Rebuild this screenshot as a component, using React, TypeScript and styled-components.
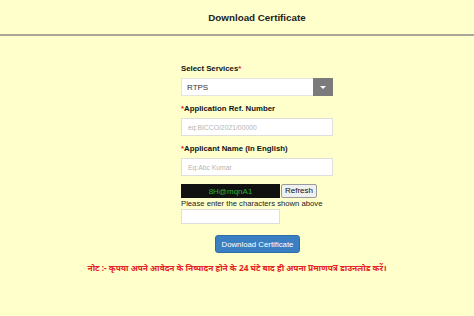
import React from "react";
import styled, { createGlobalStyle } from "styled-components";

const GlobalStyle = createGlobalStyle`
  html, body {
    margin: 0;
    padding: 0;
    background: #ffffcc;
    font-family: "Liberation Sans", Arial, sans-serif;
  }
`;

const Page = styled.div`
  width: 474px;
  height: 316px;
  background: #ffffcc;
  overflow: hidden;
`;

const Header = styled.div`
  height: 36px;
  border-bottom: 2px solid #a9a796;
  display: flex;
  align-items: center;
  justify-content: center;
  padding-left: 40px;
  box-sizing: border-box;
  font-size: 9.8px;
  font-weight: bold;
  color: #222;
`;

const Form = styled.div`
  width: 152px;
  margin: 28px 0 0 181px;
  display: flex;
  flex-direction: column;
`;

const Label = styled.div`
  font-size: 7.8px;
  font-weight: bold;
  color: #111;
  height: 10px;
  line-height: 10px;
  margin-bottom: 4px;
  white-space: nowrap;
`;

const Star = styled.span`
  color: #e02020;
`;

const SelectBox = styled.div`
  height: 18px;
  background: #fff;
  border: 1px solid #e4e4e4;
  box-sizing: border-box;
  display: flex;
  align-items: center;
  font-size: 8px;
  color: #333;
  padding-left: 5px;
  margin-bottom: 8px;
`;

const SelectText = styled.span`
  flex: 1;
`;

const Caret = styled.div`
  width: 20px;
  height: 18px;
  margin-right: -1px;
  background: #7b7b7b;
  display: flex;
  align-items: center;
  justify-content: center;
  &::after {
    content: "";
    border-left: 3px solid transparent;
    border-right: 3px solid transparent;
    border-top: 3px solid #fff;
  }
`;

const TextInput = styled.input<{ $w?: number; $h?: number; $mb?: number }>`
  width: ${(p) => p.$w ?? 152}px;
  height: ${(p) => p.$h ?? 18}px;
  box-sizing: border-box;
  border: 1px solid #dedede;
  background: #fff;
  font-family: "Liberation Sans", Arial, sans-serif;
  font-size: 6.8px;
  padding: 0 6px;
  margin: 0 0 ${(p) => p.$mb ?? 8}px 0;
  outline: none;
  &::placeholder {
    color: #b5b5b5;
  }
`;

const CaptchaRow = styled.div`
  display: flex;
  align-items: center;
  gap: 1px;
`;

const Captcha = styled.div`
  width: 99px;
  height: 14px;
  background: #111;
  color: #2bb035;
  font-size: 8px;
  display: flex;
  align-items: center;
  justify-content: center;
`;

const RefreshButton = styled.button`
  height: 14px;
  padding: 0 3px;
  font-family: "Liberation Sans", Arial, sans-serif;
  font-size: 8px;
  color: #111;
  background: #f0f0f0;
  border: 1px solid #9a9a9a;
  border-radius: 2px;
  line-height: 1;
`;

const Hint = styled.div`
  font-size: 7.7px;
  color: #222;
  height: 10px;
  line-height: 10px;
  margin: 1px 0 0;
  white-space: nowrap;
`;

const SubmitWrap = styled.div`
  display: flex;
  padding-left: 34px;
`;

const Submit = styled.button`
  width: 85px;
  height: 18px;
  background: #3a7fc2;
  color: #fff;
  border: 1px solid #2e6da4;
  border-radius: 3px;
  font-family: "Liberation Sans", Arial, sans-serif;
  font-size: 7.8px;
  padding: 0;
`;

const Note = styled.div`
  text-align: center;
  color: #e52525;
  font-weight: bold;
  font-size: 8.3px;
  margin-top: 9px;
  font-family: "Noto Sans", "Lohit Devanagari", sans-serif;
`;

export default function App() {
  return (
    <Page>
      <GlobalStyle />
      <Header>Download Certificate</Header>
      <Form>
        <Label>
          Select Services<Star>*</Star>
        </Label>
        <SelectBox>
          <SelectText>RTPS</SelectText>
          <Caret />
        </SelectBox>
        <Label>
          <Star>*</Star>Application Ref. Number
        </Label>
        <TextInput placeholder="eg:BICCO/2021/00000" />
        <Label>
          <Star>*</Star>Applicant Name (In English)
        </Label>
        <TextInput placeholder="Eg:Abc Kumar" />
        <CaptchaRow>
          <Captcha>8H@mqnA1</Captcha>
          <RefreshButton>Refresh</RefreshButton>
        </CaptchaRow>
        <Hint>Please enter the characters shown above</Hint>
        <TextInput $w={99} $h={15} $mb={11} />
        <SubmitWrap>
          <Submit>Download Certificate</Submit>
        </SubmitWrap>
      </Form>
      <Note>
        नोट :- कृपया अपने आवेदन के निष्पादन होने के 24 घंटे बाद ही अपना प्रमाणपत्र डाउनलोड करें।
      </Note>
    </Page>
  );
}
